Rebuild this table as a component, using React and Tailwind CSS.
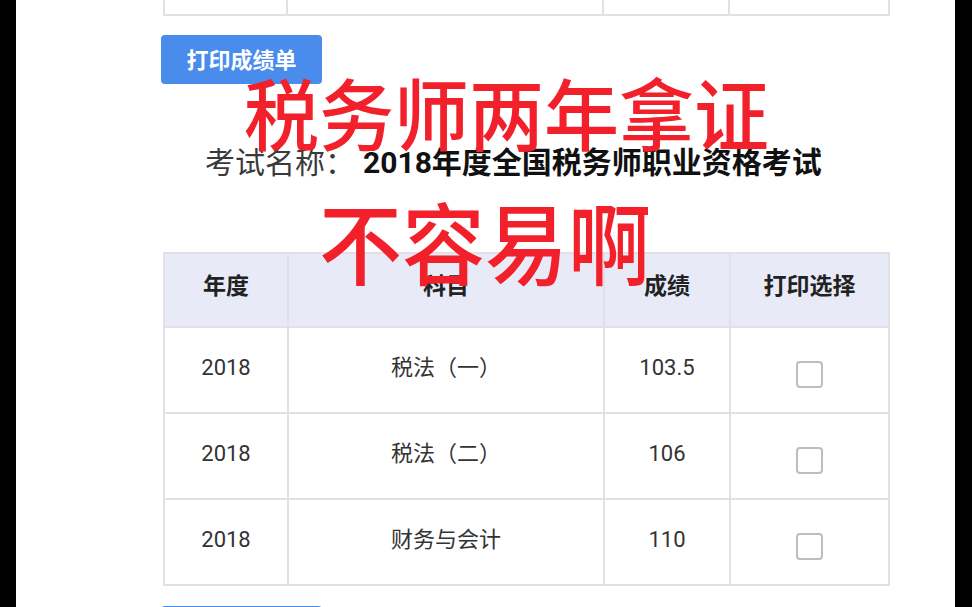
import React from 'react';

const rows = [
  { year: '2018', subject: '税法（一）', score: '103.5' },
  { year: '2018', subject: '税法（二）', score: '106' },
  { year: '2018', subject: '财务与会计', score: '110' },
];

const font = { fontFamily: "Roboto, 'Noto Sans CJK SC', sans-serif" };

export default function App() {
  return (
    <div className="flex w-[972px] h-[607px] overflow-hidden bg-black" style={font}>
      <div className="w-[16px] shrink-0 bg-black" />
      <div className="relative flex-1 bg-white overflow-hidden">
        <div className="ml-[147px] w-[727px] h-[16px] flex border-x-2 border-b-2 border-[#e2e0e6]">
          <div className="w-[123px] border-r-2 border-[#e2e0e6]" />
          <div className="w-[316px] border-r-2 border-[#e2e0e6]" />
          <div className="w-[126px] border-r-2 border-[#e2e0e6]" />
          <div className="flex-1" />
        </div>

        <button className="ml-[145px] mt-[19px] w-[161px] h-[49px] rounded-[4px] bg-[#4a8cec] text-white text-[22px] font-semibold flex items-center justify-center pt-[2px]">
          打印成绩单
        </button>

        <div className="ml-[189px] mt-[62px] h-[34px] flex items-center text-[30px] leading-none">
          <span className="text-[#3a3a3a]">考试名称：</span>
          <span className="ml-[8px] font-bold text-[#111]">2018年度全国税务师职业资格考试</span>
        </div>

        <table className="ml-[147px] mt-[72px] w-[727px] border-collapse text-center table-fixed">
          <thead>
            <tr className="bg-[#e8ebf7] h-[74px]">
              <th className="w-[124px] border-2 border-[#e2e0e6] text-[23px] font-bold text-[#222] pb-[6px]">年度</th>
              <th className="w-[316px] border-2 border-[#e2e0e6] text-[23px] font-bold text-[#222] pb-[6px]">科目</th>
              <th className="w-[126px] border-2 border-[#e2e0e6] text-[23px] font-bold text-[#222] pb-[6px]">成绩</th>
              <th className="border-2 border-[#e2e0e6] text-[23px] font-bold text-[#222] pb-[6px]">打印选择</th>
            </tr>
          </thead>
          <tbody>
            {rows.map((r, i) => (
              <tr key={i} className="h-[86px] text-[22px] text-[#333]">
                <td className="border-2 border-[#e2e0e6] pb-[5px]">{r.year}</td>
                <td className="border-2 border-[#e2e0e6] pb-[5px]">{r.subject}</td>
                <td className="border-2 border-[#e2e0e6] pb-[5px]">{r.score}</td>
                <td className="border-2 border-[#e2e0e6]">
                  <div className="mx-auto mt-[8px] w-[27px] h-[27px] rounded-[4px] border-2 border-[#bdbdbd] bg-white" />
                </td>
              </tr>
            ))}
          </tbody>
        </table>

        <div className="ml-[145px] mt-[20px] w-[161px] h-[49px] rounded-[4px] bg-[#4a8cec]" />

        <div className="absolute left-[228px] top-[79px] origin-top scale-y-[1.04] text-[75px] leading-none font-medium text-[#f2202b] whitespace-nowrap">
          税务师两年拿证
        </div>
        <div className="absolute left-[303px] top-[203px] origin-top scale-y-[1.07] text-[83px] leading-none font-medium text-[#f2202b] whitespace-nowrap">
          不容易啊
        </div>
      </div>
      <div className="w-[17px] shrink-0 bg-black" />
    </div>
  );
}
